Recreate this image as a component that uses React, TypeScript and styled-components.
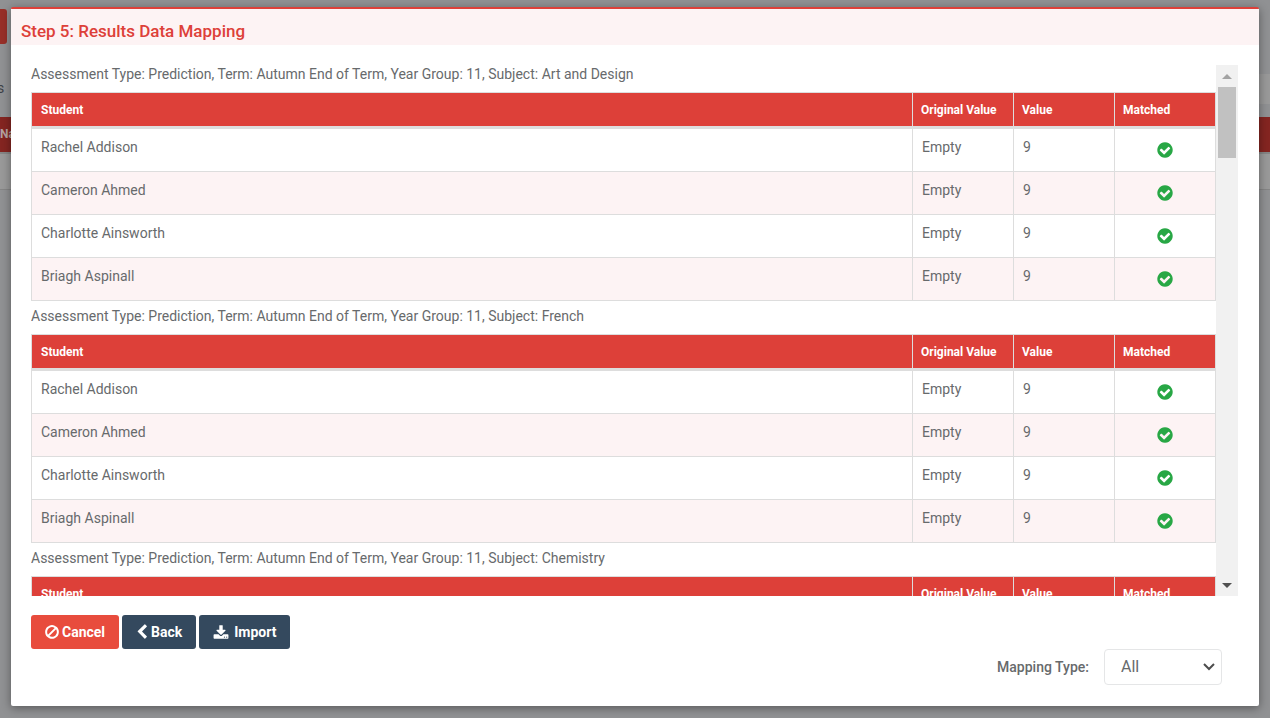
import React from "react";
import styled, { createGlobalStyle } from "styled-components";

const GlobalStyle = createGlobalStyle`
  *, *::before, *::after { box-sizing: border-box; }
  html, body, #root { height: 100%; }
  body {
    margin: 0;
    overflow: hidden;
    background: #909193;
    color: #676a6c;
    font-family: Roboto, sans-serif;
    font-size: 14px;
    line-height: 20px;
  }
`;

const Page = styled.div`
  position: relative;
  height: 100%;
`;

const Backdrop = styled.div`
  display: flex;
  flex-direction: column;
  height: 100%;
  padding-top: 9px;
`;

const PageButton = styled.span`
  width: 7px;
  height: 35px;
  background: #972f28;
  border-radius: 0 3px 3px 0;
`;

const PageText = styled.div`
  height: 30px;
  margin-top: 30px;
  margin-bottom: 13px;
  padding-top: 4px;
  background: linear-gradient(#999, #999) right / 40px 30px no-repeat;
  color: #3d4046;
  line-height: 20px;
  text-indent: -3px;
`;

const PageTableHead = styled.div`
  height: 35px;
  background: #842521;
  color: #b5a3a2;
  font-size: 12px;
  font-weight: 700;
  line-height: 35px;
`;

const PageTableRow = styled.div`
  height: 38px;
  background: #999;
  border-top: 2px solid #858585;
  border-bottom: 1px solid #858585;
`;

const Overlay = styled.div`
  position: absolute;
  inset: 0;
  padding: 7px 11px 12px;
`;

const Dialog = styled.section`
  display: flex;
  flex-direction: column;
  height: 100%;
  background: #fff;
  border-top: 2px solid #dd4039;
  border-radius: 2px;
  box-shadow: 0 2px 10px rgba(0, 0, 0, 0.4);
`;

const Title = styled.h1`
  margin: 0;
  padding: 12px 10px 4px;
  background: #fdf3f4;
  color: #dd4039;
  font-size: 17px;
  font-weight: 500;
  line-height: 20px;
`;

const Body = styled.div`
  display: flex;
  flex: 1;
  flex-direction: column;
  min-height: 0;
  padding: 20px 21px 21px 20px;
`;

const Results = styled.div`
  display: flex;
  flex: 1;
  min-height: 0;
`;

const ResultList = styled.div`
  flex: 1;
  overflow: hidden;
`;

const Table = styled.table`
  width: 100%;
  border-collapse: separate;
  border-spacing: 0;
  table-layout: fixed;
  border-top: 1px solid #ddd;
  border-left: 1px solid #ddd;
`;

const Caption = styled.caption<{ $first: boolean }>`
  height: ${(p) => (p.$first ? 27 : 33)}px;
  padding-top: ${(p) => (p.$first ? 0 : 6)}px;
  line-height: 18px;
  text-align: left;
`;

const Head = styled.th<{ $narrow?: boolean }>`
  width: ${(p) => (p.$narrow ? "101px" : "auto")};
  height: 36px;
  padding: 0 8px 0 ${(p) => (p.$narrow ? 8 : 9)}px;
  background: #dd4039;
  border-right: 1px solid #ddd;
  border-bottom: 3px solid #ddd;
  color: #fff;
  font-size: 12px;
  font-weight: 700;
  text-align: left;
  white-space: nowrap;
`;

const Row = styled.tr`
  &:nth-child(even) { background: #fdf3f4; }
`;

const Cell = styled.td<{ $icon?: boolean }>`
  height: 43px;
  padding: ${(p) => (p.$icon ? "12px 8px 0" : "8px 8px 0 9px")};
  border-right: 1px solid #ddd;
  border-bottom: 1px solid #ddd;
  text-align: ${(p) => (p.$icon ? "center" : "left")};
  vertical-align: top;
`;

const Scrollbar = styled.div`
  display: flex;
  flex-direction: column;
  width: 22px;
  background: #f1f1f1;
`;

const ScrollButton = styled.button`
  display: flex;
  align-items: center;
  justify-content: center;
  height: 22px;
  padding: 0;
  background: none;
  border: 0;
`;

const ScrollTrack = styled.div`
  flex: 1;
  padding: 0 2px;
`;

const ScrollThumb = styled.div`
  height: 71px;
  background: #c1c1c1;
`;

const Actions = styled.div`
  display: flex;
  gap: 3px;
  padding-top: 19px;
`;

const Button = styled.button<{ $danger?: boolean; $gap: number }>`
  display: flex;
  align-items: center;
  gap: ${(p) => p.$gap}px;
  height: 34px;
  padding: 0 14px;
  background: ${(p) => (p.$danger ? "#e84c3d" : "#34495e")};
  border: 0;
  border-radius: 3px;
  color: #fff;
  font: 700 14px/20px Roboto, sans-serif;
`;

const Icon = styled.svg`
  display: block;
  fill: currentColor;
`;

const Tick = styled(Icon)`
  margin: 0 auto;
  color: #28a745;
`;

const Filter = styled.div`
  display: flex;
  align-items: center;
  justify-content: flex-end;
  gap: 15px;
  padding-right: 16px;
`;

const FilterLabel = styled.label`
  font-weight: 500;
`;

const SelectBox = styled.div`
  display: grid;
  align-items: center;
  width: 118px;
  > * { grid-area: 1 / 1; }
  > svg { justify-self: end; margin-right: 6px; pointer-events: none; }
`;

const Select = styled.select`
  width: 100%;
  height: 36px;
  padding: 0 16px;
  appearance: none;
  background: #fff;
  border: 1px solid #e5e6e7;
  border-radius: 4px;
  color: #676a6c;
  font: 400 16px/24px Roboto, sans-serif;
`;

const CHECK =
  "M1412 734q0-28-18-46l-91-90q-19-19-45-19t-45 19l-408 407-226-226q-19-19-45-19t-45 19l-91 90q-18 18-18 46 0 27 18 45l362 362q19 19 45 19 27 0 46-19l543-543q18-18 18-45zm252 162q0 209-103 385.5t-279.5 279.5-385.5 103-385.5-103-279.5-279.5-103-385.5 103-385.5 279.5-279.5 385.5-103 385.5 103 279.5 279.5 103 385.5z";
const BAN =
  "M1440 893q0-161-87-295l-754 753q137 89 297 89 111 0 211.5-43.5t173.5-116.5 116-174.5 43-212.5zm-999 299l755-754q-135-91-300-91-148 0-273 73t-198 199-73 274q0 162 89 299zm1223-299q0 157-61 300t-163.5 246-245 164-298.5 61-298.5-61-245-164-163.5-246-61-300 61-299.5 163.5-245.5 245-164 298.5-61 298.5 61 245 164 163.5 245.5 61 299.5z";
const CHEVRON =
  "M1427 301l-531 531 531 531q19 19 19 45t-19 45l-166 166q-19 19-45 19t-45-19l-742-742q-19-19-19-45t19-45l742-742q19-19 45-19t45 19l166 166q19 19 19 45t-19 45z";
const DOWNLOAD =
  "M1344 1344q0-26-19-45t-45-19-45 19-19 45 19 45 45 19 45-19 19-45zm256 0q0-26-19-45t-45-19-45 19-19 45 19 45 45 19 45-19 19-45zm128-224v320q0 40-28 68t-68 28h-1472q-40 0-68-28t-28-68v-320q0-40 28-68t68-28h465l135 136q58 56 136 56t136-56l136-136h464q40 0 68 28t28 68zm-325-569q17 41-14 70l-448 448q-18 19-45 19t-45-19l-448-448q-31-29-14-70 17-39 59-39h256v-448q0-26 19-45t45-19h256q26 0 45 19t19 45v448h256q42 0 59 39z";

const subjects = ["Art and Design", "French", "Chemistry"];
const students = ["Rachel Addison", "Cameron Ahmed", "Charlotte Ainsworth", "Briagh Aspinall"];

function ResultTable({ subject, first }: { subject: string; first: boolean }) {
  return (
    <Table>
      <Caption $first={first}>
        Assessment Type: Prediction, Term: Autumn End of Term, Year Group: 11, Subject: {subject}
      </Caption>
      <thead>
        <tr>
          <Head>Student</Head>
          <Head $narrow>Original Value</Head>
          <Head $narrow>Value</Head>
          <Head $narrow>Matched</Head>
        </tr>
      </thead>
      <tbody>
        {students.map((name) => (
          <Row key={name}>
            <Cell>{name}</Cell>
            <Cell>Empty</Cell>
            <Cell>9</Cell>
            <Cell $icon>
              <Tick width="18" height="18" viewBox="0 0 1792 1792" role="img" aria-label="Matched">
                <path d={CHECK} />
              </Tick>
            </Cell>
          </Row>
        ))}
      </tbody>
    </Table>
  );
}

export default function App() {
  return (
    <Page>
      <GlobalStyle />
      <Backdrop aria-hidden="true">
        <PageButton />
        <PageText>s</PageText>
        <PageTableHead>Na</PageTableHead>
        <PageTableRow />
      </Backdrop>
      <Overlay>
        <Dialog role="dialog" aria-labelledby="dialog-title">
          <Title id="dialog-title">Step 5: Results Data Mapping</Title>
          <Body>
            <Results>
              <ResultList>
                {subjects.map((subject, i) => (
                  <ResultTable key={subject} subject={subject} first={i === 0} />
                ))}
              </ResultList>
              <Scrollbar>
                <ScrollButton aria-label="Scroll up">
                  <Icon width="10" height="5" viewBox="0 0 10 5" color="#a3a3a3">
                    <path d="M0 5L5 0L10 5z" />
                  </Icon>
                </ScrollButton>
                <ScrollTrack>
                  <ScrollThumb />
                </ScrollTrack>
                <ScrollButton aria-label="Scroll down">
                  <Icon width="10" height="5" viewBox="0 0 10 5" color="#505050">
                    <path d="M0 0H10L5 5z" />
                  </Icon>
                </ScrollButton>
              </Scrollbar>
            </Results>
            <Actions>
              <Button $danger $gap={3}>
                <Icon width="14" height="16" viewBox="128 0 1536 1792"><path d={BAN} /></Icon>
                Cancel
              </Button>
              <Button $gap={3}>
                <Icon width="12" height="16" viewBox="256 0 1280 1792"><path d={CHEVRON} /></Icon>
                Back
              </Button>
              <Button $gap={5}>
                <Icon width="16" height="16" viewBox="64 -128 1664 1792"><path d={DOWNLOAD} /></Icon>
                Import
              </Button>
            </Actions>
            <Filter>
              <FilterLabel htmlFor="mapping-type">Mapping Type:</FilterLabel>
              <SelectBox>
                <Select id="mapping-type" defaultValue="All">
                  <option>All</option>
                </Select>
                <svg width="14" height="8" viewBox="0 0 14 8" fill="none" stroke="#4d4d4d" strokeWidth="2">
                  <path d="M2 1L7 6L12 1" />
                </svg>
              </SelectBox>
            </Filter>
          </Body>
        </Dialog>
      </Overlay>
    </Page>
  );
}
